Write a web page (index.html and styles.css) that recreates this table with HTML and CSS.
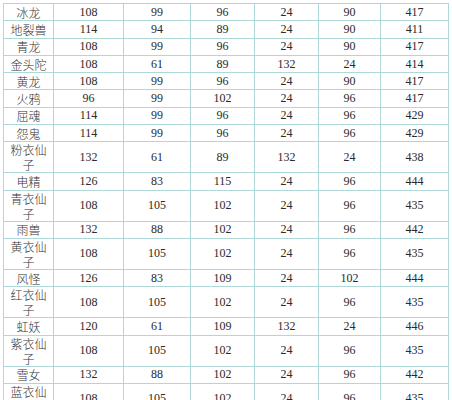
FILE: index.html
```html
<!DOCTYPE html>
<html>
<head>
<meta charset="utf-8">
<link rel="stylesheet" href="styles.css">
</head>
<body>
<table class="stats">
<colgroup>
<col class="c-name"><col class="c1"><col class="c2"><col class="c3"><col class="c4"><col class="c5"><col class="c6">
</colgroup>
<tbody>
<tr><td class="name">冰龙</td><td>108</td><td>99</td><td>96</td><td>24</td><td>90</td><td>417</td></tr>
<tr><td class="name">地裂兽</td><td>114</td><td>94</td><td>89</td><td>24</td><td>90</td><td>411</td></tr>
<tr><td class="name">青龙</td><td>108</td><td>99</td><td>96</td><td>24</td><td>90</td><td>417</td></tr>
<tr><td class="name">金头陀</td><td>108</td><td>61</td><td>89</td><td>132</td><td>24</td><td>414</td></tr>
<tr><td class="name">黄龙</td><td>108</td><td>99</td><td>96</td><td>24</td><td>90</td><td>417</td></tr>
<tr><td class="name">火鸦</td><td>96</td><td>99</td><td>102</td><td>24</td><td>96</td><td>417</td></tr>
<tr><td class="name">屈魂</td><td>114</td><td>99</td><td>96</td><td>24</td><td>96</td><td>429</td></tr>
<tr><td class="name">怨鬼</td><td>114</td><td>99</td><td>96</td><td>24</td><td>96</td><td>429</td></tr>
<tr><td class="name">粉衣仙子</td><td>132</td><td>61</td><td>89</td><td>132</td><td>24</td><td>438</td></tr>
<tr><td class="name">电精</td><td>126</td><td>83</td><td>115</td><td>24</td><td>96</td><td>444</td></tr>
<tr><td class="name">青衣仙子</td><td>108</td><td>105</td><td>102</td><td>24</td><td>96</td><td>435</td></tr>
<tr><td class="name">雨兽</td><td>132</td><td>88</td><td>102</td><td>24</td><td>96</td><td>442</td></tr>
<tr><td class="name">黄衣仙子</td><td>108</td><td>105</td><td>102</td><td>24</td><td>96</td><td>435</td></tr>
<tr><td class="name">风怪</td><td>126</td><td>83</td><td>109</td><td>24</td><td>102</td><td>444</td></tr>
<tr><td class="name">红衣仙子</td><td>108</td><td>105</td><td>102</td><td>24</td><td>96</td><td>435</td></tr>
<tr><td class="name">虹妖</td><td>120</td><td>61</td><td>109</td><td>132</td><td>24</td><td>446</td></tr>
<tr><td class="name">紫衣仙子</td><td>108</td><td>105</td><td>102</td><td>24</td><td>96</td><td>435</td></tr>
<tr><td class="name">雪女</td><td>132</td><td>88</td><td>102</td><td>24</td><td>96</td><td>442</td></tr>
<tr><td class="name">蓝衣仙子</td><td>108</td><td>105</td><td>102</td><td>24</td><td>96</td><td>435</td></tr>
</tbody>
</table>
</body>
</html>
```
FILE: styles.css
```css
html, body {
  margin: 0;
  padding: 0;
  background: #ffffff;
}
body {
  padding: 3px 0 0 3px;
  overflow: hidden;
}
.stats {
  border-collapse: collapse;
  table-layout: fixed;
  width: 445px;
}
.c-name { width: 50px; }
.c1 { width: 70px; }
.c2 { width: 67px; }
.c3 { width: 64px; }
.c4 { width: 64px; }
.c5 { width: 62px; }
.c6 { width: 68px; }
.stats td {
  border: 1px solid #afd9d9;
  text-align: center;
  vertical-align: middle;
  padding: 0 4px;
  height: 16.3px;
  line-height: 15px;
  font-family: "Liberation Serif", "Times New Roman", "DejaVu Serif", serif;
  font-size: 12px;
  color: #2a2a2a;
}
.stats td.name {
  font-family: "Noto Sans CJK SC", sans-serif;
  font-size: 12px;
  font-weight: 300;
  color: #333;
}
```
